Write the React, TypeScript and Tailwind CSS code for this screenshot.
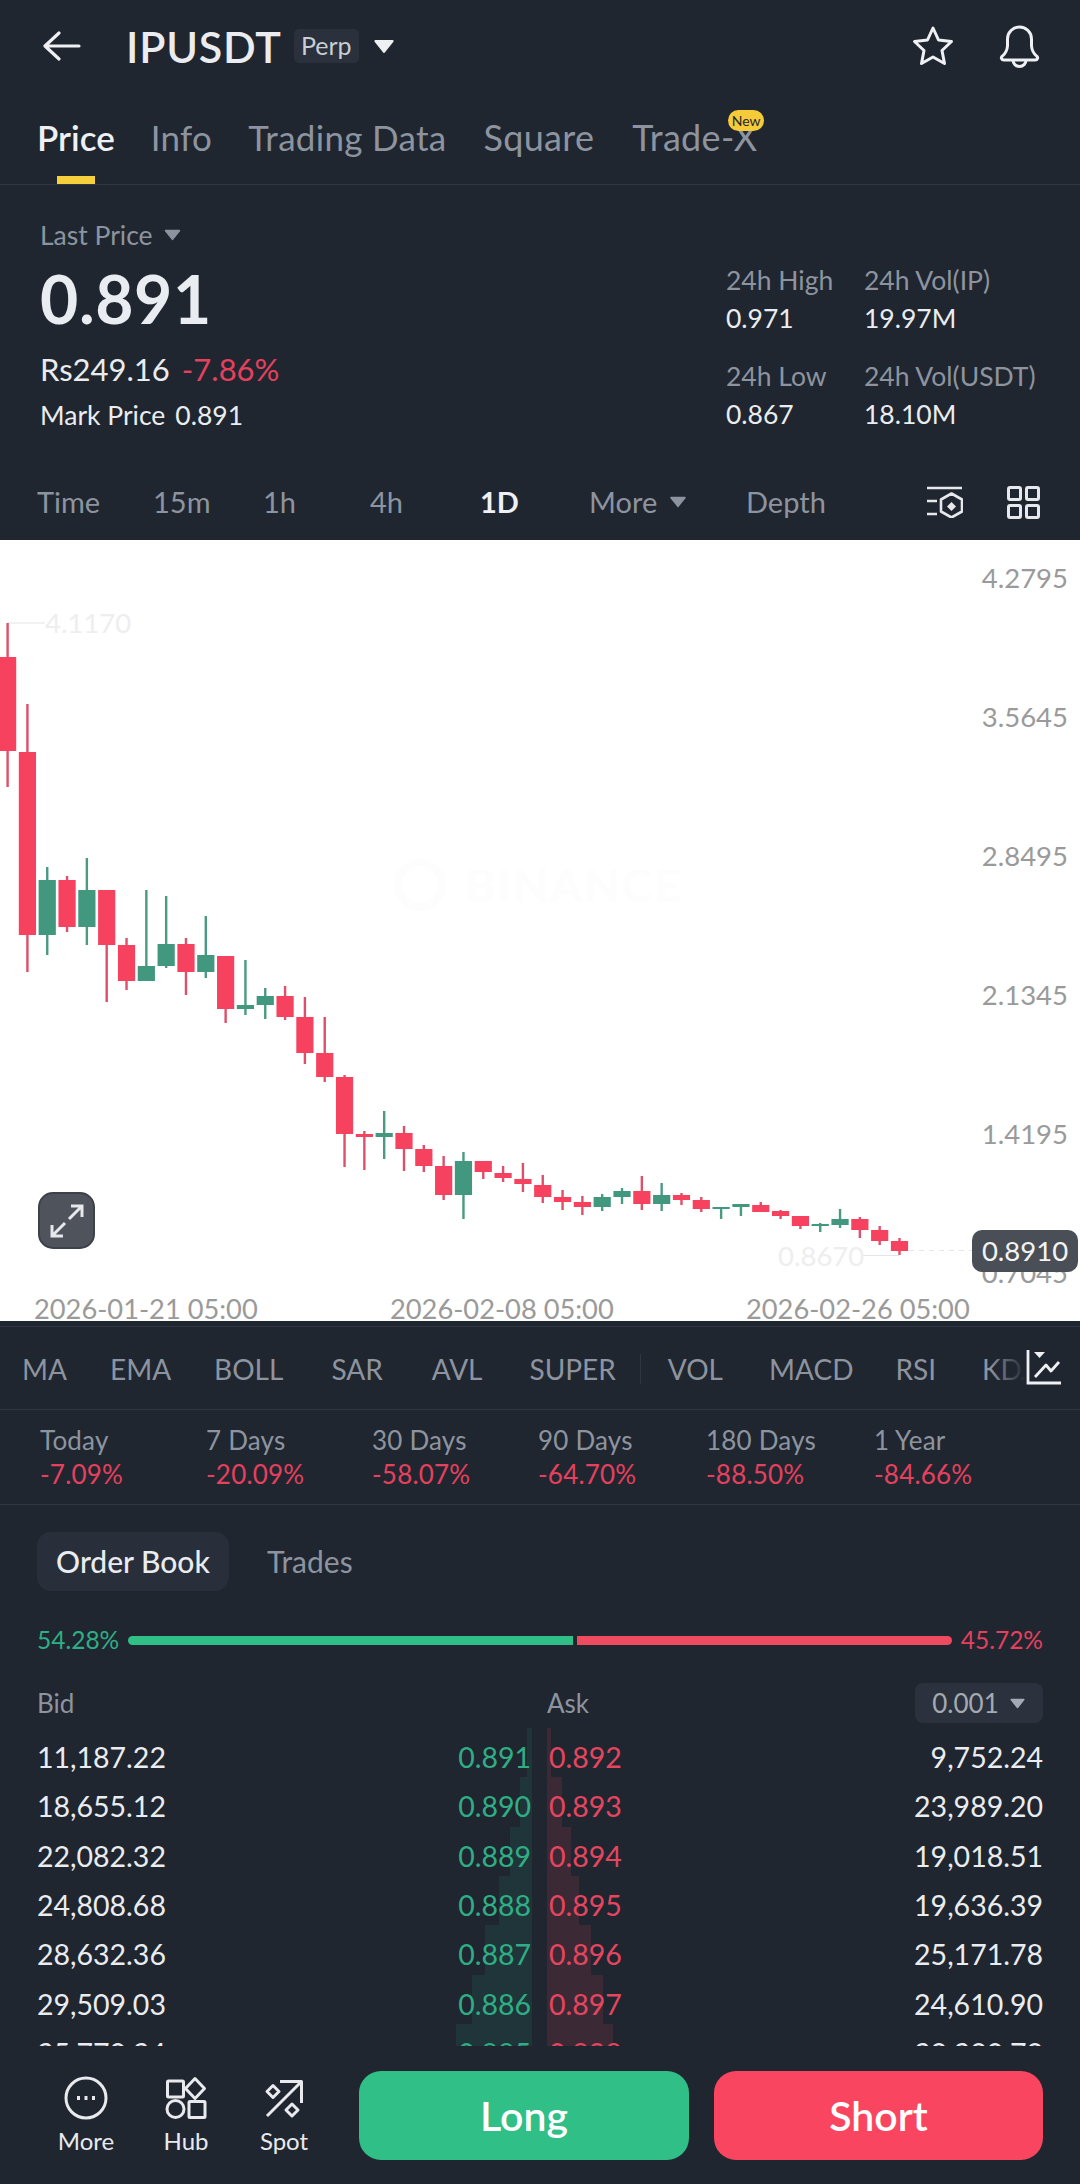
import React from 'react';

type Candle = [number, number, number, number, 0 | 1];

// wick top, wick bottom, body top, body bottom, green? (page coordinates)
const CANDLES: Candle[] = [
  [623, 787, 657, 751, 0], [704, 972, 752, 935, 0], [867, 955, 880, 935, 1], [876, 932, 880, 927, 0],
  [858, 945, 890, 927, 1], [890, 1002, 890, 945, 0], [938, 990, 945, 981, 0], [890, 981, 966, 981, 1],
  [896, 968, 944, 966, 1], [938, 995, 944, 972, 0], [916, 978, 955, 972, 1], [956, 1023, 956, 1009, 0],
  [960, 1015, 1005, 1009, 1], [988, 1019, 996, 1005, 1], [986, 1020, 996, 1017, 0], [997, 1064, 1017, 1053, 0],
  [1017, 1082, 1053, 1077, 0], [1075, 1167, 1077, 1134, 0], [1131, 1170, 1134, 1137, 0], [1111, 1159, 1133, 1137, 1],
  [1126, 1171, 1133, 1149, 0], [1145, 1172, 1149, 1166, 0], [1156, 1200, 1166, 1195, 0], [1152, 1219, 1161, 1195, 1],
  [1161, 1179, 1161, 1172, 0], [1166, 1182, 1173, 1178, 0], [1163, 1192, 1179, 1184, 0], [1175, 1203, 1185, 1197, 0],
  [1190, 1210, 1197, 1202, 0], [1196, 1215, 1202, 1207, 0], [1194, 1211, 1197, 1207, 1], [1188, 1204, 1191, 1197, 1],
  [1176, 1210, 1191, 1204, 0], [1183, 1211, 1195, 1204, 1], [1193, 1205, 1195, 1200, 0], [1197, 1212, 1200, 1209, 0],
  [1207, 1219, 1207, 1209, 1], [1204, 1216, 1204, 1207, 1], [1202, 1212, 1205, 1212, 0], [1210, 1219, 1211, 1216, 0],
  [1216, 1229, 1216, 1226, 0], [1223, 1232, 1224, 1226, 1], [1209, 1228, 1219, 1225, 1], [1217, 1238, 1219, 1230, 0],
  [1226, 1245, 1230, 1241, 0], [1238, 1255, 1241, 1251, 0],
];

const BOOK = [
  { bid: '11,187.22', bp: '0.891', ap: '0.892', ask: '9,752.24', bw: 5, aw: 4 },
  { bid: '18,655.12', bp: '0.890', ap: '0.893', ask: '23,989.20', bw: 12, aw: 15 },
  { bid: '22,082.32', bp: '0.889', ap: '0.894', ask: '19,018.51', bw: 22, aw: 24 },
  { bid: '24,808.68', bp: '0.888', ap: '0.895', ask: '19,636.39', bw: 33, aw: 32 },
  { bid: '28,632.36', bp: '0.887', ap: '0.896', ask: '25,171.78', bw: 47, aw: 44 },
  { bid: '29,509.03', bp: '0.886', ap: '0.897', ask: '24,610.90', bw: 60, aw: 56 },
  { bid: '35,770.34', bp: '0.885', ap: '0.898', ask: '32,320.72', bw: 76, aw: 66 },
];

const PERIODS = [
  ['Today', '-7.09%'], ['7 Days', '-20.09%'], ['30 Days', '-58.07%'],
  ['90 Days', '-64.70%'], ['180 Days', '-88.50%'], ['1 Year', '-84.66%'],
];

const Caret = ({ className }: { className: string }) => (
  <svg viewBox="0 0 20 14" className={className} fill="currentColor" stroke="currentColor" strokeWidth="2" strokeLinejoin="round">
    <polygon points="2,2 18,2 10,12" />
  </svg>
);

const Chart = () => (
  <div className="relative h-[781px] bg-white">
    <div className="absolute left-[465px] top-[320px] text-[46px] font-bold leading-[50px] tracking-[2px] text-[#fdfdfd]">BINANCE</div>
    <svg viewBox="0 540 1080 781" className="absolute inset-0 h-[781px] w-[1080px]">
      <circle cx="420" cy="885" r="22" fill="none" stroke="#fdfdfd" strokeWidth="8" />
      <line x1="8" y1="623" x2="45" y2="623" stroke="#e4e4e4" strokeWidth="1" />
      <line x1="861" y1="1255.5" x2="899" y2="1255.5" stroke="#e4e4e4" strokeWidth="1" />
      <line x1="899" y1="1250.5" x2="972" y2="1250.5" stroke="#e6e6e6" strokeWidth="1" strokeDasharray="5 5" />
      {CANDLES.map(([wt, wb, bt, bb, up], i) => {
        const x = 7.6 + i * 19.82;
        return (
          <g key={i}>
            <rect x={x - 1.2} y={wt} width="2.4" height={wb - wt} fill={up ? '#4a9a82' : '#dc5069'} />
            <rect x={x - 8.6} y={bt} width="17.2" height={bb - bt} fill={up ? '#41987e' : '#f7425f'} />
          </g>
        );
      })}
    </svg>
    <div className="absolute left-[45px] top-[66px] text-[27.5px] leading-[34px] text-[#eeeeee]">4.1170</div>
    <div className="absolute left-[778px] top-[699px] text-[27.5px] leading-[34px] text-[#eeeeee]">0.8670</div>
    <div className="absolute right-[12px] top-[18px] flex flex-col items-end gap-[99px] text-[27.5px] leading-[40px] text-[#9a9a9a]">
      <span>4.2795</span>
      <span>3.5645</span>
      <span>2.8495</span>
      <span>2.1345</span>
      <span>1.4195</span>
      <span>0.7045</span>
    </div>
    <div className="absolute left-[34px] top-[757px] flex gap-[133px] text-[27.25px] leading-[24px] text-[#9a9a9a]">
      <span className="w-[223px] whitespace-nowrap">2026-01-21 05:00</span>
      <span className="w-[223px] whitespace-nowrap">2026-02-08 05:00</span>
      <span className="w-[223px] whitespace-nowrap">2026-02-26 05:00</span>
    </div>
    <div className="absolute left-[972px] top-[690px] flex h-[42px] w-[106px] items-center justify-center rounded-[10px] bg-[#4a4f57] text-[27.5px] text-[#f2f3f5]">
      0.8910
    </div>
    <div className="absolute left-[38px] top-[652px] flex h-[57px] w-[57px] items-center justify-center rounded-[15px] border-2 border-[#3c414a] bg-[#4e535c]">
      <svg viewBox="0 0 36 36" className="h-[36px] w-[36px]" fill="none" stroke="#e6e8ec" strokeWidth="3">
        <path d="M20 16 L33 3 M22 3 H33 V14 M16 20 L3 33 M3 22 V33 H14" />
      </svg>
    </div>
  </div>
);

const BottomIcons = () => (
  <div className="mt-[5px] flex pl-[36px] text-[24px] text-[#e8eaee]">
    <div className="flex w-[100px] flex-col items-center">
      <svg viewBox="0 0 44 44" className="h-[44px] w-[44px]" fill="none" stroke="currentColor" strokeWidth="3">
        <circle cx="22" cy="22" r="20" />
        <path d="M13 22 h3 M20.5 22 h3 M28 22 h3" strokeWidth="4" />
      </svg>
      <span className="mt-[5px] leading-[32px]">More</span>
    </div>
    <div className="flex w-[100px] flex-col items-center">
      <svg viewBox="0 0 44 44" className="h-[44px] w-[44px]" fill="none" stroke="currentColor" strokeWidth="3">
        <rect x="3.5" y="5" width="16" height="16" rx="1" />
        <path d="M31 2.5 L40.5 12.5 L31 22.5 L21.5 12.5 Z" strokeLinejoin="round" />
        <circle cx="11.5" cy="33" r="8.5" />
        <rect x="25" y="25.5" width="16" height="16" rx="1" />
      </svg>
      <span className="mt-[5px] leading-[32px]">Hub</span>
    </div>
    <div className="flex w-[96px] flex-col items-center">
      <svg viewBox="0 0 44 44" className="h-[44px] w-[44px]" fill="none" stroke="currentColor" strokeWidth="3" strokeLinejoin="round">
        <path d="M5 40 L39 6 M18 5.5 H39.5 V27" />
        <path d="M11 9.5 L17 15.5 L11 21.5 L5 15.5 Z" />
        <path d="M30 28 L36 34 L30 40 L24 34 Z" />
      </svg>
      <span className="mt-[5px] leading-[32px]">Spot</span>
    </div>
  </div>
);

export default function App() {
  return (
    <div className="h-[2184px] w-[1080px] overflow-hidden bg-[#1f2630] font-['Lato',sans-serif] text-[#eaecef]">
      <header className="flex h-[92px] items-center pl-[43px] pr-[40px]">
        <svg viewBox="0 0 38 30" className="h-[30px] w-[38px]" fill="none" stroke="#eef0f3" strokeWidth="3.2" strokeLinecap="round" strokeLinejoin="round">
          <path d="M36 15 H3 M16 2 L2 15 L16 28" />
        </svg>
        <span className="ml-[45px] text-[43px] font-semibold leading-none tracking-[0.8px]">IPUSDT</span>
        <span className="ml-[12px] flex h-[34px] w-[65px] items-center justify-center rounded-[5px] bg-[#2a313c] text-[25px] text-[#c9cdd4]">Perp</span>
        <Caret className="ml-[14px] h-[15px] w-[22px] text-[#eef0f3]" />
        <svg viewBox="0 0 42 40" className="ml-auto h-[40px] w-[42px]" fill="none" stroke="#eef0f3" strokeWidth="3" strokeLinejoin="round">
          <polygon points="21,2 26.5,14 39.5,15.5 30,24.5 32.5,37.5 21,31 9.5,37.5 12,24.5 2.5,15.5 15.5,14" />
        </svg>
        <svg viewBox="0 0 41 43" className="ml-[45px] h-[43px] w-[41px]" fill="none" stroke="#eef0f3" strokeWidth="3" strokeLinejoin="round">
          <path d="M2.5 33.5 Q2 32 3.5 31 Q8 27 8.5 21 V14 A12 12 0 0 1 32.5 14 V21 Q33 27 37.5 31 Q39 32 38.5 33.5 Q38 35 36 35 H5 Q3 35 2.5 33.5 Z" />
          <path d="M14 35 A6.5 6.5 0 0 0 27 35" />
        </svg>
      </header>

      <nav className="relative flex h-[93px] gap-[36px] border-b border-[#2f3641] pl-[37px] pt-[25px] text-[35px] leading-[40px] tracking-[0.3px] text-[#8d949f]">
        <div className="relative text-[35px] font-semibold tracking-normal text-[#eef0f3]">
          Price
          <div className="absolute left-[20px] top-[59px] h-[8px] w-[38px] bg-[#f5cf3c]" />
        </div>
        <span>Info</span>
        <span>Trading Data</span>
        <span className="ml-[1px] text-[36px]">Square</span>
        <span className="relative ml-[2px] text-[36px]">
          Trade-X
          <span className="absolute left-[96px] top-[-7px] flex h-[21px] w-[36px] items-center justify-center rounded-full bg-[#f5cb3a] text-[14px] leading-none tracking-normal text-[#1f2630]">New</span>
        </span>
      </nav>

      <section className="flex h-[279px] justify-between pl-[40px] pr-[42px]">
        <div>
          <div className="mt-[34px] flex items-center text-[26.5px] leading-[32px] text-[#8d949f]">
            Last Price
            <Caret className="ml-[10px] h-[12px] w-[19px]" />
          </div>
          <div className="mt-[13px] text-[66px] font-bold leading-[70px] tracking-[0.6px] text-[#e9edf2]">0.891</div>
          <div className="mt-[17px] flex text-[31px] leading-[36px]">
            <span>Rs249.16</span>
            <span className="ml-[12px] text-[#e5405e]">-7.86%</span>
          </div>
          <div className="mt-[11px] flex text-[26.5px] leading-[34px]">
            <span>Mark Price</span>
            <span className="ml-[10px]">0.891</span>
          </div>
        </div>
        <div className="mt-[78px] grid grid-cols-[138px_174px] gap-y-[24px] self-start text-[26.5px] leading-[34px] text-[#eaecef]">
          <div><div className="text-[#8d949f]">24h High</div><div className="mt-[4px]">0.971</div></div>
          <div><div className="text-[#8d949f]">24h Vol(IP)</div><div className="mt-[4px]">19.97M</div></div>
          <div><div className="text-[#8d949f]">24h Low</div><div className="mt-[4px]">0.867</div></div>
          <div><div className="text-[#8d949f]">24h Vol(USDT)</div><div className="mt-[4px]">18.10M</div></div>
        </div>
      </section>

      <div className="flex h-[76px] items-center pl-[37px] pr-[40px] text-[29px] text-[#8d949f]">
        <div className="grid grid-cols-[116px_110px_107px_110px_109px_157px_100px]">
          <span>Time</span>
          <span>15m</span>
          <span>1h</span>
          <span>4h</span>
          <span className="font-bold text-[#eef0f3]">1D</span>
          <span className="flex items-center">More<Caret className="ml-[12px] h-[12px] w-[18px]" /></span>
          <span>Depth</span>
        </div>
        <svg viewBox="0 0 36 32" className="ml-auto h-[32px] w-[36px]" fill="none" stroke="#e6e8ec" strokeWidth="2.6">
          <path d="M0 2 H35 M0 15 H10 M0 28 H10" />
          <path d="M24.5 9 L35 15 V27 L24.5 33 L14 27 V15 Z" strokeLinejoin="round" transform="translate(0 -1.5)" />
          <path d="M24.5 16 L29 20.5 L24.5 25 L20 20.5 Z" fill="#e6e8ec" stroke="none" />
        </svg>
        <svg viewBox="0 0 33 33" className="ml-[44px] h-[33px] w-[33px]" fill="none" stroke="#e6e8ec" strokeWidth="3">
          <rect x="1.5" y="1.5" width="12" height="12" rx="1.5" />
          <rect x="19.5" y="1.5" width="12" height="12" rx="1.5" />
          <rect x="1.5" y="19.5" width="12" height="12" rx="1.5" />
          <rect x="19.5" y="19.5" width="12" height="12" rx="1.5" />
        </svg>
      </div>

      <Chart />

      <div className="relative mt-[5px] flex h-[84px] items-center gap-[46px] overflow-hidden border-b border-t border-[#2f3641] pl-[22px] pt-[2px] text-[28px] text-[#8d949f]">
        <span>MA</span>
        <span className="-ml-[3px]">EMA</span>
        <span className="-ml-[3px]">BOLL</span>
        <span className="ml-[2px]">SAR</span>
        <span className="ml-[3px]">AVL</span>
        <span className="-mr-[22px] ml-[1px]">SUPER</span>
        <span className="h-[30px] w-px bg-[#2f3641]" />
        <span className="-ml-[19px]">VOL</span>
        <span>MACD</span>
        <span className="-ml-[4px]">RSI</span>
        <span className="whitespace-nowrap">KDJ</span>
        <div className="absolute bottom-0 right-[54px] top-0 w-[36px] bg-gradient-to-r from-transparent to-[#1f2630]" />
        <div className="absolute bottom-0 right-0 top-0 flex w-[54px] items-center bg-[#1f2630]">
          <svg viewBox="0 0 36 36" className="h-[36px] w-[36px]" fill="none" stroke="#eef0f3" strokeWidth="2.8">
            <path d="M2 0 V33 H35" />
            <path d="M9 27 L20 15 L25 21 L33 12" strokeLinejoin="round" />
            <polygon points="8,2 19,2 13.5,8" fill="#eef0f3" stroke="none" />
          </svg>
        </div>
      </div>

      <div className="grid h-[95px] grid-cols-[166px_166px_166px_168px_168px_1fr] border-b border-[#2f3641] pl-[40px] pt-[13px] text-[26px] leading-[34px] tracking-[0.2px]">
        {PERIODS.map(([label, value]) => (
          <div key={label}>
            <div className="text-[#8d949f]">{label}</div>
            <div className="text-[#e5405e]">{value}</div>
          </div>
        ))}
      </div>

      <div className="flex items-center pl-[37px] pt-[27px] text-[30px]">
        <div className="flex h-[59px] w-[192px] items-center justify-center rounded-[14px] bg-[#282f3b] font-medium">Order Book</div>
        <span className="ml-[38px] text-[#8d949f]">Trades</span>
      </div>

      <div className="mt-[34px] flex h-[30px] items-center pl-[37px] pr-[37px] text-[24.5px]">
        <span className="w-[91px] text-[#2fae85]">54.28%</span>
        <div className="h-[9px] w-[445px] rounded-l-full bg-[#2fbf87]" />
        <div className="ml-[4px] h-[9px] w-[375px] rounded-r-full bg-[#ee4a60]" />
        <span className="ml-auto text-[#e5405e]">45.72%</span>
      </div>

      <div className="mt-[28px] flex h-[40px] items-center pl-[37px] pr-[37px] text-[26px] text-[#8d949f]">
        <span className="w-[510px]">Bid</span>
        <span>Ask</span>
        <div className="ml-auto flex h-[40px] w-[128px] items-center justify-center gap-[10px] rounded-[8px] bg-[#2b323d] text-[#a4a9b2]">
          0.001
          <Caret className="h-[11px] w-[17px]" />
        </div>
      </div>

      <div className="mt-[5px] h-[318px] overflow-hidden">
        {BOOK.map((r) => (
          <div key={r.bp} className="relative grid h-[49.33px] grid-cols-2 items-center gap-[18px] pl-[37px] pr-[37px] pt-[8px] text-[28.5px]">
            <div className="absolute bottom-0 right-[548px] top-0 bg-[#2ebd85]/10" style={{ width: r.bw }} />
            <div className="absolute bottom-0 left-[547px] top-0 bg-[#f6465d]/13" style={{ width: r.aw }} />
            <div className="relative flex justify-between">
              <span>{r.bid}</span>
              <span className="text-[#2fae85]">{r.bp}</span>
            </div>
            <div className="relative flex justify-between">
              <span className="text-[#e5455f]">{r.ap}</span>
              <span>{r.ask}</span>
            </div>
          </div>
        ))}
      </div>

      <footer className="flex items-start pt-[25px]">
        <BottomIcons />
        <button className="ml-[27px] flex h-[89px] w-[330px] items-center justify-center rounded-[22px] bg-[#2fbf87] text-[41px] font-semibold text-white">Long</button>
        <button className="ml-[25px] flex h-[89px] w-[329px] items-center justify-center rounded-[22px] bg-[#f9455f] text-[41px] font-semibold text-white">Short</button>
      </footer>
    </div>
  );
}
